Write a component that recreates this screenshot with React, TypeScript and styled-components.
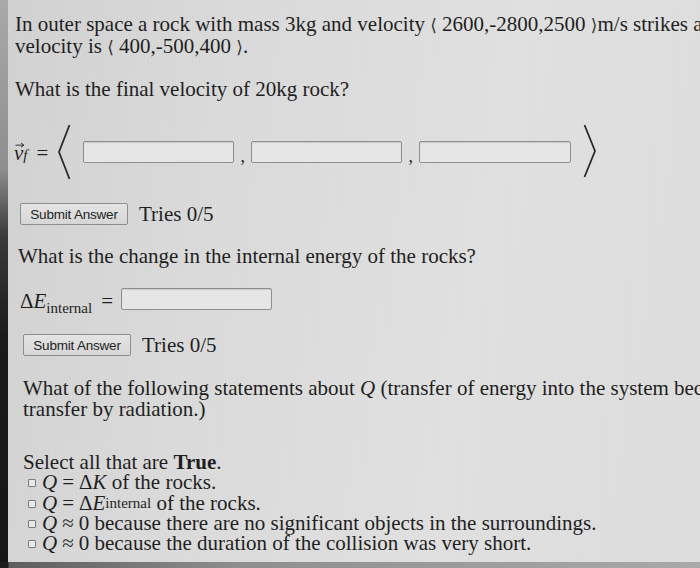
import React from 'react';
import styled, { createGlobalStyle } from 'styled-components';

const GlobalStyle = createGlobalStyle`
  html, body {
    margin: 0;
    padding: 0;
  }
  body {
    width: 700px;
    height: 568px;
    overflow: hidden;
    background: #d9d9d9;
  }
`;

const Screen = styled.div`
  display: grid;
  grid-template-columns: 8px 1fr;
  grid-template-rows: 562px 6px;
  width: 700px;
  height: 568px;
  overflow: hidden;
  font-family: "Liberation Serif", "Times New Roman", serif;
  color: #1f1f1f;
`;

const SideBezel = styled.div`
  background: linear-gradient(
    to bottom,
    #a9a9a9 0%,
    #8e8e8e 30%,
    #3a3a3a 42%,
    #1b1b1b 60%,
    #161616 100%
  );
`;

const BottomBezel = styled.div`
  grid-column: 1 / span 2;
  background: linear-gradient(90deg, #1c1c1c 0, #1c1c1c 8px, #5e5e5e 9px, #8f8f8f 35%, #a9a9a9 100%);
`;

const Content = styled.div`
  min-width: 0;
  overflow: hidden;
  padding-top: 14px;
  font-size: 21px;
  line-height: 21px;
  background:
    repeating-linear-gradient(90deg, rgba(255, 255, 255, 0.07) 0 1px, transparent 1px 3px),
    linear-gradient(100deg, #d0d0d0 0%, #d9d9d9 30%, #dfdfdf 65%, #dcdcdc 100%);
`;

interface BlockProps {
  $shift: number;
  $top?: number;
  $lh?: number;
}

const Para = styled.div<BlockProps>`
  margin: ${p => p.$top || 0}px 0 0 ${p => p.$shift}px;
  line-height: ${p => p.$lh || 21}px;
`;

const Line = styled.div`
  white-space: nowrap;
`;

const Ang = styled.span`
  font-family: "DejaVu Serif", serif;
  font-size: 17px;
  font-weight: 300;
  color: #333;
`;

const I = styled.i`
  font-style: italic;
`;

const Sub = styled.sub<{ $size?: number; $drop?: number }>`
  font-size: ${p => p.$size || 15}px;
  line-height: 0;
  vertical-align: ${p => -(p.$drop ?? 5)}px;
`;

const Rel = styled.span`
  margin: 0 5px;
`;

/* vector row */
const VectorRow = styled.div<BlockProps>`
  display: flex;
  align-items: center;
  height: 55px;
  margin: ${p => p.$top || 0}px 0 0 ${p => p.$shift}px;
`;

const VecLabel = styled.span`
  display: inline-flex;
  align-items: baseline;
  margin-top: 4px;
`;

const VecLetter = styled.i`
  position: relative;
  font-style: italic;
`;

const VecArrow = styled.svg`
  position: absolute;
  left: 1px;
  top: -1px;
`;

const Equals = styled.span`
  margin: 3px 9px 0 9px;
`;

const BigBracket = styled.svg<{ $gap: number; $side: 'left' | 'right' }>`
  flex: none;
  ${p => (p.$side === 'left' ? `margin-right: ${p.$gap}px;` : `margin-left: ${p.$gap}px;`)}
`;

const AnswerBox = styled.input<{ $width: number }>`
  box-sizing: border-box;
  width: ${p => p.$width}px;
  height: 22px;
  margin: 0;
  padding: 0 4px;
  border: 1px solid #8f8f8f;
  border-radius: 2px;
  background: #e6e6e6;
  box-shadow: inset 0 1px 1px rgba(0, 0, 0, 0.12);
  outline: none;
  flex: none;
`;

const Comma = styled.span`
  width: 17px;
  text-align: center;
  align-self: center;
  margin-top: 10px;
  font-size: 18px;
`;

/* submit row */
const SubmitRow = styled.div<BlockProps>`
  display: flex;
  align-items: center;
  height: 22px;
  margin: ${p => p.$top || 0}px 0 0 ${p => p.$shift}px;
`;

const SubmitButton = styled.button`
  box-sizing: border-box;
  height: 22px;
  width: 108px;
  padding: 0;
  border: 1px solid #8d8d8d;
  border-radius: 2px;
  background: linear-gradient(#e4e4e4, #d6d6d6);
  font-family: "Liberation Sans", Arial, sans-serif;
  font-size: 13.5px;
  color: #232323;
  letter-spacing: -0.2px;
`;

const Tries = styled.span`
  margin-left: 11px;
  white-space: nowrap;
`;

/* energy row */
const EnergyRow = styled.div<BlockProps>`
  display: flex;
  align-items: center;
  height: 21px;
  margin: ${p => p.$top || 0}px 0 0 ${p => p.$shift}px;
`;

const EnergyLabel = styled.span`
  white-space: nowrap;
  margin-top: 6px;
`;

const EnergyEquals = styled.span`
  margin: 6px 8px 0 9px;
`;

/* options */
const Option = styled.div`
  display: flex;
  align-items: center;
  white-space: nowrap;
  padding-left: 5px;
`;

const Checkbox = styled.span`
  box-sizing: border-box;
  width: 8px;
  height: 8px;
  margin: 2px 6px 0 0;
  border: 1px solid #7c7c7c;
  border-radius: 1px;
  background: #e9e9e9;
  flex: none;
`;

export default function App() {
  return (
    <>
      <GlobalStyle />
      <Screen>
        <SideBezel />
        <Content>
          <Para $shift={7}>
            <Line>
              In outer space a rock with mass 3kg and velocity <Ang>⟨</Ang> 2600,-2800,2500 <Ang>⟩</Ang>m/s strikes a
              stationary rock with mass 20kg. After the collision, the 3kg rock's
            </Line>
            <Line>
              velocity is <Ang>⟨</Ang> 400,-500,400 <Ang>⟩</Ang>.
            </Line>
          </Para>

          <Para $shift={7} $top={21}>
            <Line>What is the final velocity of 20kg rock?</Line>
          </Para>

          <VectorRow $shift={6} $top={24}>
            <VecLabel>
              <VecLetter>
                v
                <VecArrow width="10" height="6" viewBox="0 0 10 6">
                  <path d="M0.5 3.2 H8.5 M6 1 L9 3.2 L6 5.2" stroke="#333" strokeWidth="1" fill="none" />
                </VecArrow>
              </VecLetter>
              <Sub $size={15} $drop={4}><I>f</I></Sub>
            </VecLabel>
            <Equals>=</Equals>
            <BigBracket $side="left" $gap={12} width="14" height="56" viewBox="0 0 14 56">
              <polyline points="12.5,1 2,28 12.5,55" stroke="#2a2a2a" strokeWidth="1.8" fill="none" />
            </BigBracket>
            <AnswerBox $width={151} />
            <Comma>,</Comma>
            <AnswerBox $width={151} />
            <Comma>,</Comma>
            <AnswerBox $width={152} />
            <BigBracket $side="right" $gap={12} width="14" height="56" viewBox="0 0 14 56">
              <polyline points="1.5,1 12,27 1.5,53" stroke="#2a2a2a" strokeWidth="1.8" fill="none" />
            </BigBracket>
          </VectorRow>

          <SubmitRow $shift={12} $top={24}>
            <SubmitButton type="button">Submit Answer</SubmitButton>
            <Tries>Tries 0/5</Tries>
          </SubmitRow>

          <Para $shift={10} $top={21}>
            <Line>What is the change in the internal energy of the rocks?</Line>
          </Para>

          <EnergyRow $shift={12} $top={21}>
            <EnergyLabel>
              Δ<I>E</I>
              <Sub $size={15}>internal</Sub>
            </EnergyLabel>
            <EnergyEquals>=</EnergyEquals>
            <AnswerBox $width={151} />
          </EnergyRow>

          <SubmitRow $shift={15} $top={25}>
            <SubmitButton type="button">Submit Answer</SubmitButton>
            <Tries>Tries 0/5</Tries>
          </SubmitRow>

          <Para $shift={15} $top={22}>
            <Line>
              What of the following statements about <I>Q</I> (transfer of energy into the system because of a temperature difference)
            </Line>
            <Line>transfer by radiation.)</Line>
          </Para>

          <Para $shift={15} $top={32} $lh={20.3}>
            <Line>
              Select all that are <b>True</b>.
            </Line>
            <Option>
              <Checkbox />
              <I>Q</I>
              <Rel>=</Rel>Δ<I>K</I>&nbsp;of the rocks.
            </Option>
            <Option>
              <Checkbox />
              <I>Q</I>
              <Rel>=</Rel>Δ<I>E</I>
              <Sub $size={15} $drop={3}>internal</Sub>&nbsp;of the rocks.
            </Option>
            <Option>
              <Checkbox />
              <I>Q</I>
              <Rel>≈</Rel>0 because there are no significant objects in the surroundings.
            </Option>
            <Option>
              <Checkbox />
              <I>Q</I>
              <Rel>≈</Rel>0 because the duration of the collision was very short.
            </Option>
          </Para>
        </Content>
        <BottomBezel />
      </Screen>
    </>
  );
}
